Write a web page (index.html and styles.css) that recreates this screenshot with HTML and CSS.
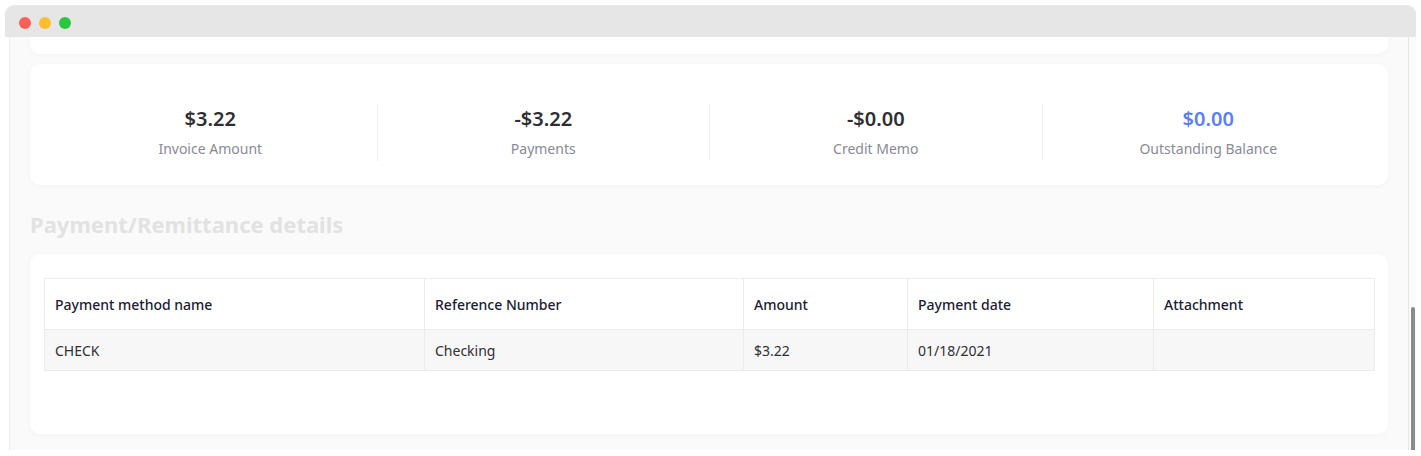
FILE: index.html
```html
<!DOCTYPE html>
<html lang="en">
<head>
<meta charset="utf-8">
<title>Invoice payments</title>
<link rel="stylesheet" href="styles.css">
</head>
<body>
<div class="window">
  <div class="titlebar">
    <span class="light red"></span>
    <span class="light yellow"></span>
    <span class="light green"></span>
  </div>
  <div class="content">
    <div class="main">
      <div class="card card-top"></div>
      <div class="card summary">
        <div class="stat">
          <div class="value">$3.22</div>
          <div class="label">Invoice Amount</div>
        </div>
        <div class="stat">
          <div class="value">-$3.22</div>
          <div class="label">Payments</div>
        </div>
        <div class="stat">
          <div class="value">-$0.00</div>
          <div class="label">Credit Memo</div>
        </div>
        <div class="stat">
          <div class="value blue">$0.00</div>
          <div class="label">Outstanding Balance</div>
        </div>
      </div>
      <h2 class="section-title">Payment/Remittance details</h2>
      <div class="card table-card">
        <table class="payments">
          <colgroup>
            <col class="c1"><col class="c2"><col class="c3"><col class="c4"><col class="c5">
          </colgroup>
          <thead>
            <tr>
              <th>Payment method name</th>
              <th>Reference Number</th>
              <th>Amount</th>
              <th>Payment date</th>
              <th>Attachment</th>
            </tr>
          </thead>
          <tbody>
            <tr>
              <td>CHECK</td>
              <td>Checking</td>
              <td>$3.22</td>
              <td>01/18/2021</td>
              <td></td>
            </tr>
          </tbody>
        </table>
      </div>
    </div>
    <div class="scrollbar"><div class="thumb"></div></div>
  </div>
</div>
</body>
</html>
```

FILE: styles.css
```css
* { box-sizing: border-box; }

body {
  margin: 0;
  background: #ffffff;
  font-family: "Noto Sans", "Open Sans", sans-serif;
  color: #333333;
}

.window {
  margin: 5px 5px 0 5px;
  width: 1411px;
}

.titlebar {
  height: 32px;
  background: #e6e6e6;
  border-radius: 9px 9px 0 0;
  display: flex;
  align-items: center;
  gap: 8px;
  padding: 3px 0 0 14px;
}

.light {
  width: 12px;
  height: 12px;
  border-radius: 50%;
  display: block;
}
.light.red { background: #fe5f57; }
.light.yellow { background: #febc2e; }
.light.green { background: #28c840; }

.content {
  display: flex;
  height: 413px;
  background: #ffffff;
}

.main {
  flex: 1;
  margin-left: 4px;
  border-left: 1px solid #ececec;
  border-right: 1px solid #e6e6e6;
  background: #fafafa;
  padding: 0 20px;
  overflow: hidden;
}

.scrollbar {
  width: 7px;
  position: relative;
  background: #fafafa;
}
.scrollbar .thumb {
  position: absolute;
  left: 2px;
  top: 270px;
  width: 4px;
  height: 143px;
  border-radius: 3px 3px 0 0;
  background: #8a8a8a;
}

.card {
  background: #ffffff;
  border-radius: 10px;
  box-shadow: 0 1px 6px rgba(0, 0, 0, 0.03);
}

.card-top {
  height: 17px;
  border-radius: 0 0 10px 10px;
}

.summary {
  margin-top: 10px;
  height: 121px;
  padding: 40px 14px 24px;
  display: grid;
  grid-template-columns: repeat(4, 1fr);
}

.stat {
  text-align: center;
  height: 57px;
}
.stat + .stat {
  border-left: 1px solid #efefef;
}

.value {
  font-size: 20px;
  font-weight: 600;
  line-height: 30px;
  color: #2f2f33;
}
.value.blue { color: #5b7ffa; }

.label {
  margin-top: 4px;
  font-size: 14px;
  line-height: 22px;
  color: #8a8a96;
}

.section-title {
  margin: 24px 0 15px;
  font-size: 22px;
  line-height: 30px;
  font-weight: 700;
  color: #e2e2e2;
}

.table-card {
  height: 180px;
  padding: 24px 15px 0 14px;
}

.payments {
  width: 100%;
  border-collapse: collapse;
  table-layout: fixed;
  font-size: 14px;
}
.payments col.c1 { width: 380px; }
.payments col.c2 { width: 319px; }
.payments col.c3 { width: 164px; }
.payments col.c4 { width: 246px; }
.payments col.c5 { width: 221px; }

.payments th,
.payments td {
  border: 1px solid #ececec;
  text-align: left;
  padding: 0 10px;
  white-space: nowrap;
}

.payments th {
  height: 51px;
  font-weight: 500;
  color: #1c1c33;
  background: #ffffff;
}

.payments td {
  height: 41px;
  color: #2e2e33;
  background: #f7f7f7;
}
```
